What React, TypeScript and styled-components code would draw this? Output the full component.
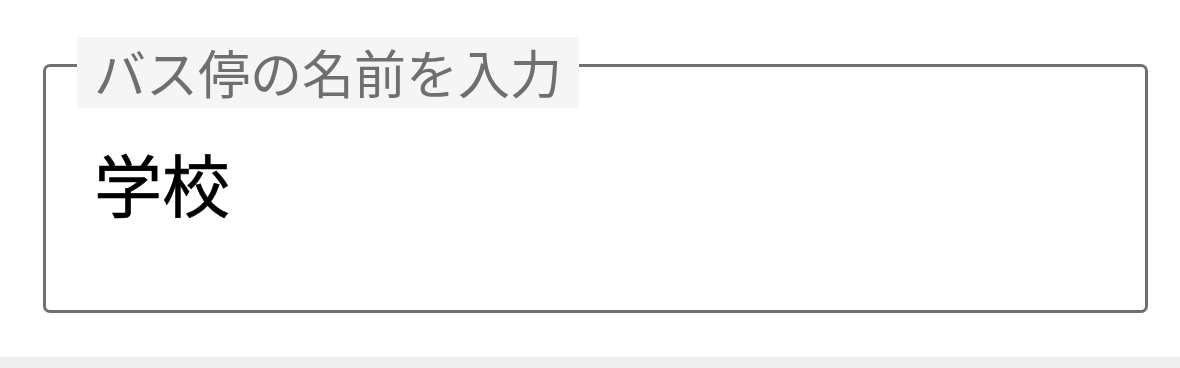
import { createGlobalStyle, styled } from "styled-components";

const GlobalStyle = createGlobalStyle`
    html, body {
        margin: 0;
        padding: 0;
        background: #ffffff;
    }
    body {
        font-family: "Noto Sans CJK JP", "Noto Sans", sans-serif;
    }
`;

const Page = styled.div`
    width: 1180px;
    height: 368px;
    display: flex;
    flex-direction: column;
    overflow: hidden;
`;

const Form = styled.div`
    padding: 64px 32px 0 43px;
    flex: 1;
`;

const Field = styled.div`
    position: relative;
    box-sizing: border-box;
    width: 1105px;
    height: 249px;
    border: 3px solid #6f6f6f;
    border-radius: 7px;
    padding: 76px 48px 0;
`;

// floating label sits over the top border
const Label = styled.span`
    position: absolute;
    top: -30px;
    left: 31px;
    height: 71px;
    padding: 0 17px;
    background: #f5f5f5;
    color: #6f6f6f;
    font-size: 52px;
    line-height: 70px;
    white-space: nowrap;
`;

const Value = styled.div`
    color: #000000;
    font-size: 68px;
    line-height: 80px;
    -webkit-text-stroke: 0.6px #000000;
`;

const BottomBar = styled.div`
    height: 11px;
    background: #eeeeee;
`;

function App() {
    return <Page>
        <GlobalStyle />
        <Form>
            <Field>
                <Label>バス停の名前を入力</Label>
                <Value>学校</Value>
            </Field>
        </Form>
        <BottomBar />
    </Page>;
}
export default App;
